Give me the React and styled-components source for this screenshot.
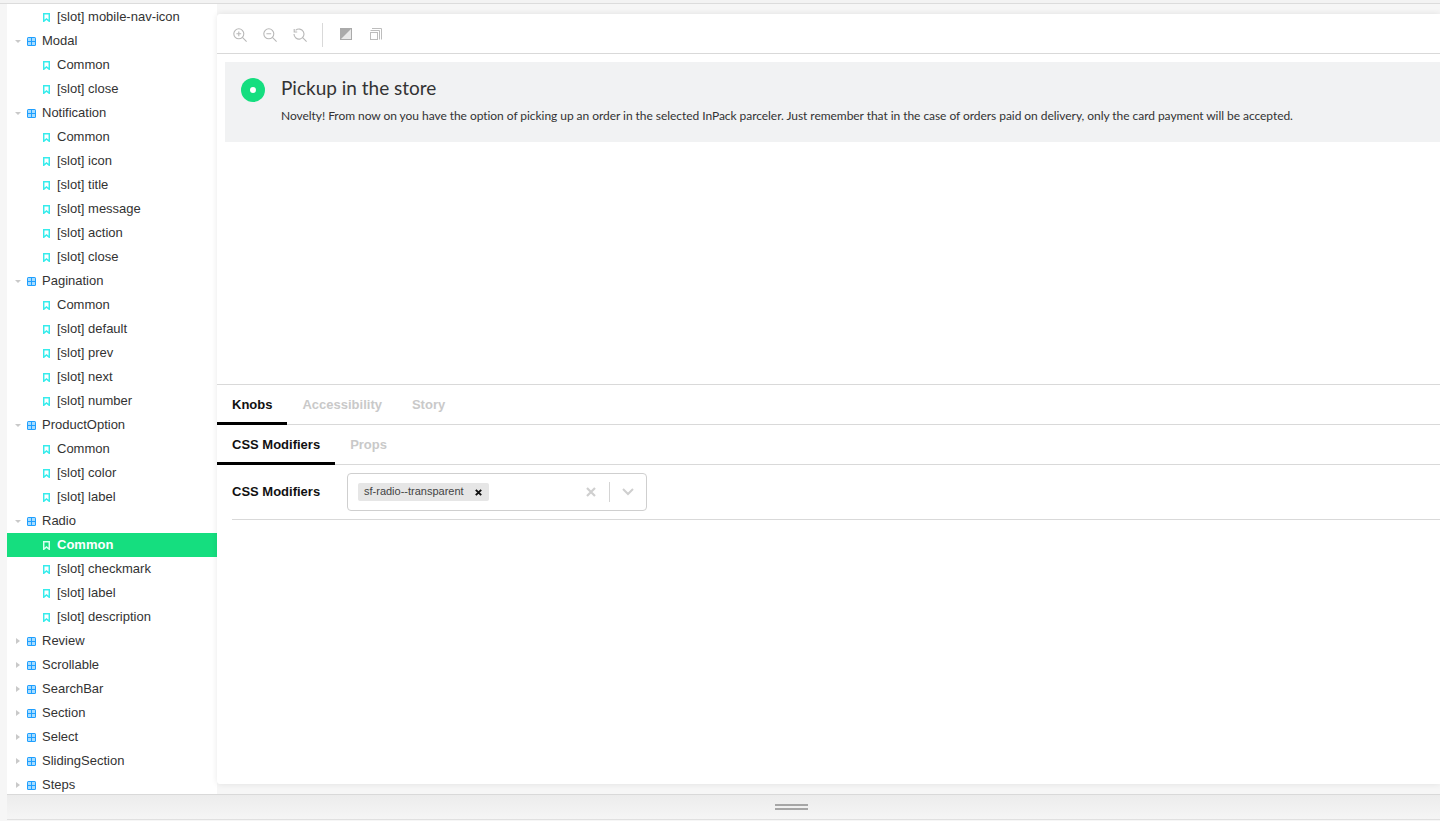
import React from "react";
import styled, { createGlobalStyle } from "styled-components";

const GlobalStyle = createGlobalStyle`
  html, body { margin: 0; padding: 0; height: 100%; overflow: hidden; }
  body { font-family: "Liberation Sans", Arial, sans-serif; background: #f6f6f6; }
`;

const Page = styled.div`
  display: flex;
  flex-direction: column;
  height: 821px;
  box-sizing: border-box;
  padding-bottom: 1px;
  overflow: hidden;
  background: #f6f6f6;
`;

const TopStrip = styled.div`
  height: 3px;
  flex: none;
  background: #f3f3f3;
  border-bottom: 1px solid #dcdcdc;
`;

const Body = styled.div`
  flex: 1;
  min-height: 0;
  display: flex;
  padding-left: 7px;
  background: #f6f6f6;
`;

const Sidebar = styled.nav`
  width: 210px;
  flex: none;
  padding-top: 1px;
  background: #fff;
  overflow: hidden;
`;

const Row = styled.div`
  display: flex;
  align-items: center;
  height: 24px;
  box-sizing: border-box;
  padding-bottom: 2px;
  font-size: 13px;
  color: ${({ $active }) => ($active ? "#fff" : "#333")};
  font-weight: ${({ $active }) => ($active ? 700 : 400)};
  background: ${({ $active }) => ($active ? "#15de7f" : "transparent")};
  padding-left: ${({ $leaf }) => ($leaf ? "36px" : "8px")};
`;

const CaretSlot = styled.span`
  width: 6px;
  flex: none;
  display: flex;
  justify-content: center;
`;

const Caret = styled.span`
  width: 0;
  height: 0;
  ${({ $open }) =>
    $open
      ? `border-left: 3px solid transparent; border-right: 3px solid transparent; border-top: 3px solid #c9c9c9; margin-top: 3px;`
      : `border-top: 3px solid transparent; border-bottom: 3px solid transparent; border-left: 4px solid #c9c9c9; margin-top: 2px;`}
`;

const RowLabel = styled.span`
  margin-left: ${({ $leaf }) => ($leaf ? "7px" : "6px")};
  white-space: nowrap;
`;

const Main = styled.main`
  flex: 1;
  min-width: 0;
  margin: 10px 0;
  background: #fff;
  display: flex;
  flex-direction: column;
  box-shadow: 0 0 6px rgba(0, 0, 0, 0.09);
  border-radius: 3px 0 0 3px;
`;

const Toolbar = styled.div`
  height: 37px;
  flex: none;
  display: flex;
  align-items: center;
  padding: 2px 0 0 16px;
  border-bottom: 1px solid #d9d9d9;
`;

const ToolButton = styled.span`
  width: 14px;
  height: 14px;
  margin-right: 16px;
  display: flex;
  svg { display: block; }
`;

const ToolDivider = styled.span`
  width: 1px;
  height: 24px;
  background: #d9d9d9;
  margin: 0 17px 0 -1px;
`;

const Preview = styled.div`
  height: 322px;
  flex: none;
  padding: 8px 0 0 8px;
`;

const Notice = styled.div`
  height: 80px;
  box-sizing: border-box;
  background: #f1f2f3;
  display: flex;
  align-items: flex-start;
  padding: 16px 0 0 16px;
`;

const RadioMark = styled.span`
  width: 24px;
  height: 24px;
  flex: none;
  border-radius: 50%;
  background: #15de7f;
  display: flex;
  align-items: center;
  justify-content: center;
  &::after {
    content: "";
    width: 6px;
    height: 6px;
    border-radius: 50%;
    background: #fff;
  }
`;

const NoticeText = styled.div`
  margin: -1px 0 0 16px;
  font-family: Lato, "Open Sans", sans-serif;
  color: #333;
`;

const NoticeTitle = styled.div`
  font-size: 19px;
  line-height: 22px;
`;

const NoticeBody = styled.div`
  font-size: 12px;
  line-height: 16px;
  margin-top: 9px;
  letter-spacing: -0.05px;
  white-space: nowrap;
`;

const TabBar = styled.div`
  flex: none;
  box-sizing: border-box;
  display: flex;
  border-top: ${({ $top }) => ($top ? "1px solid #d9d9d9" : "none")};
  border-bottom: 1px solid #d9d9d9;
  height: ${({ $top }) => ($top ? "41px" : "40px")};
`;

const Tab = styled.div`
  padding: 0 15px 2px;
  display: flex;
  align-items: center;
  font-size: 13px;
  font-weight: 700;
  color: ${({ $active }) => ($active ? "#111" : "#c9c9c9")};
  box-shadow: ${({ $active }) => ($active ? "inset 0 -3px 0 #000" : "none")};
  margin-bottom: -1px;
`;

const Knobs = styled.div`
  padding: 8px 0 0 15px;
`;

const Field = styled.div`
  display: flex;
  align-items: center;
  padding-bottom: 8px;
  border-bottom: 1px solid #d9d9d9;
`;

const FieldLabel = styled.label`
  width: 115px;
  flex: none;
  padding-bottom: 2px;
  font-size: 13px;
  font-weight: 700;
  color: #111;
`;

const Select = styled.div`
  width: 300px;
  height: 38px;
  box-sizing: border-box;
  border: 1px solid #cfcfcf;
  border-radius: 4px;
  display: flex;
  align-items: center;
  padding-left: 10px;
`;

const Tag = styled.div`
  height: 18px;
  display: flex;
  align-items: center;
  background: #e6e6e6;
  border-radius: 2px;
  padding: 0 7px 2px 6px;
  box-sizing: border-box;
  font-size: 11px;
  color: #444;
`;

const TagClose = styled.span`
  margin: 2px 0 0 11px;
  display: flex;
`;

const SelectIcons = styled.div`
  margin-left: auto;
  display: flex;
  align-items: center;
`;

const IconSlot = styled.span`
  display: flex;
  padding: 0 ${({ $pad }) => $pad}px;
`;

const Separator = styled.span`
  width: 1px;
  height: 20px;
  background: #d4d4d4;
`;

const ResizeBar = styled.div`
  height: 26px;
  flex: none;
  box-sizing: border-box;
  margin-left: 7px;
  border-top: 1px solid #d9d9d9;
  border-bottom: 1px solid #e0e0e0;
  background: linear-gradient(#ececec, #f5f5f5);
  display: flex;
  align-items: center;
  justify-content: center;
  padding-left: 136px;
`;

const Grip = styled.div`
  width: 33px;
  height: 6px;
  box-sizing: border-box;
  border-top: 2px solid #a6a6a6;
  border-bottom: 2px solid #a6a6a6;
`;

const GridIcon = () => (
  <svg width="9" height="9" viewBox="0 0 9 9" style={{ marginLeft: 6, marginTop: 2 }}>
    <rect width="9" height="9" rx="1.5" fill="#1e9fff" />
    <path d="M1 1h3v3H1zM5 1h3v3H5zM1 5h3v3H1zM5 5h3v3H5z" fill="#a6dcff" />
  </svg>
);

const BookmarkIcon = ({ color }) => (
  <svg width="7" height="9" viewBox="0 0 7 9" style={{ marginTop: 3 }}>
    <path d="M0.7 0.7h5.6v7.6L3.5 6 0.7 8.3z" fill="none" stroke={color} strokeWidth="1.5" />
  </svg>
);

const ZoomIcon = ({ kind }) => (
  <svg width="14" height="14" viewBox="0 0 14 14" fill="none" stroke="#b8b8b8" strokeWidth="1.1">
    {kind === "reset" ? (
      <path d="M2.6 2.4A5 5 0 1 1 1 6M1.2 1v3h3M9.4 9.4 13.6 13.6" />
    ) : (
      <>
        <circle cx="5.8" cy="5.8" r="5" />
        <path d="M9.4 9.4 13.6 13.6M3.4 5.8h4.8" />
        {kind === "in" && <path d="M5.8 3.4v4.8" />}
      </>
    )}
  </svg>
);

const ContrastIcon = () => (
  <svg width="12" height="12" viewBox="0 0 12 12">
    <rect x="0.5" y="0.5" width="11" height="11" fill="#e8e8e8" stroke="#aaa" />
    <path d="M0 0h12L0 12z" fill="#aaa" />
  </svg>
);

const FrameIcon = () => (
  <svg width="12" height="12" viewBox="0 0 12 12" fill="none" stroke="#bdbdbd">
    <rect x="0.5" y="4.5" width="7" height="7" />
    <path d="M0.5 2.5h9v9M2 0.5h9.5v11" />
  </svg>
);

const tree = [
  { leaf: "[slot] mobile-nav-icon" },
  { name: "Modal", open: true, items: ["Common", "[slot] close"] },
  { name: "Notification", open: true, items: ["Common", "[slot] icon", "[slot] title", "[slot] message", "[slot] action", "[slot] close"] },
  { name: "Pagination", open: true, items: ["Common", "[slot] default", "[slot] prev", "[slot] next", "[slot] number"] },
  { name: "ProductOption", open: true, items: ["Common", "[slot] color", "[slot] label"] },
  { name: "Radio", open: true, active: "Common", items: ["Common", "[slot] checkmark", "[slot] label", "[slot] description"] },
  { name: "Review" },
  { name: "Scrollable" },
  { name: "SearchBar" },
  { name: "Section" },
  { name: "Select" },
  { name: "SlidingSection" },
  { name: "Steps" },
];

const Leaf = ({ label, active }) => (
  <Row $leaf $active={active}>
    <BookmarkIcon color={active ? "#d8fff0" : "#36ecec"} />
    <RowLabel $leaf>{label}</RowLabel>
  </Row>
);

export default function App() {
  return (
    <Page>
      <GlobalStyle />
      <TopStrip />
      <Body>
        <Sidebar>
          {tree.map((node, i) =>
            node.leaf ? (
              <Leaf key={i} label={node.leaf} />
            ) : (
              <React.Fragment key={node.name}>
                <Row>
                  <CaretSlot>
                    <Caret $open={node.open} />
                  </CaretSlot>
                  <GridIcon />
                  <RowLabel>{node.name}</RowLabel>
                </Row>
                {(node.items || []).map((item) => (
                  <Leaf key={item} label={item} active={node.active === item} />
                ))}
              </React.Fragment>
            )
          )}
        </Sidebar>
        <Main>
          <Toolbar>
            <ToolButton><ZoomIcon kind="in" /></ToolButton>
            <ToolButton><ZoomIcon kind="out" /></ToolButton>
            <ToolButton><ZoomIcon kind="reset" /></ToolButton>
            <ToolDivider />
            <ToolButton><ContrastIcon /></ToolButton>
            <ToolButton><FrameIcon /></ToolButton>
          </Toolbar>
          <Preview>
            <Notice>
              <RadioMark />
              <NoticeText>
                <NoticeTitle>Pickup in the store</NoticeTitle>
                <NoticeBody>
                  Novelty! From now on you have the option of picking up an order in the selected InPack parceler. Just remember that in the case of orders paid on delivery, only the card payment will be accepted.
                </NoticeBody>
              </NoticeText>
            </Notice>
          </Preview>
          <TabBar $top>
            <Tab $active>Knobs</Tab>
            <Tab>Accessibility</Tab>
            <Tab>Story</Tab>
          </TabBar>
          <TabBar>
            <Tab $active>CSS Modifiers</Tab>
            <Tab>Props</Tab>
          </TabBar>
          <Knobs>
            <Field>
              <FieldLabel>CSS Modifiers</FieldLabel>
              <Select>
                <Tag>
                  sf-radio--transparent
                  <TagClose>
                    <svg width="7" height="7" viewBox="0 0 7 7">
                      <path d="M0.8 0.8l5.4 5.4M6.2 0.8L0.8 6.2" stroke="#111" strokeWidth="1.9" />
                    </svg>
                  </TagClose>
                </Tag>
                <SelectIcons>
                  <IconSlot $pad={13}>
                    <svg width="10" height="10" viewBox="0 0 10 10">
                      <path d="M1 1l8 8M9 1L1 9" stroke="#cfcfcf" strokeWidth="2.2" />
                    </svg>
                  </IconSlot>
                  <Separator />
                  <IconSlot $pad={12}>
                    <svg width="12" height="8" viewBox="0 0 12 8" fill="none">
                      <path d="M1 1l5 5 5-5" stroke="#cfcfcf" strokeWidth="2" />
                    </svg>
                  </IconSlot>
                </SelectIcons>
              </Select>
            </Field>
          </Knobs>
        </Main>
      </Body>
      <ResizeBar>
        <Grip />
      </ResizeBar>
    </Page>
  );
}
